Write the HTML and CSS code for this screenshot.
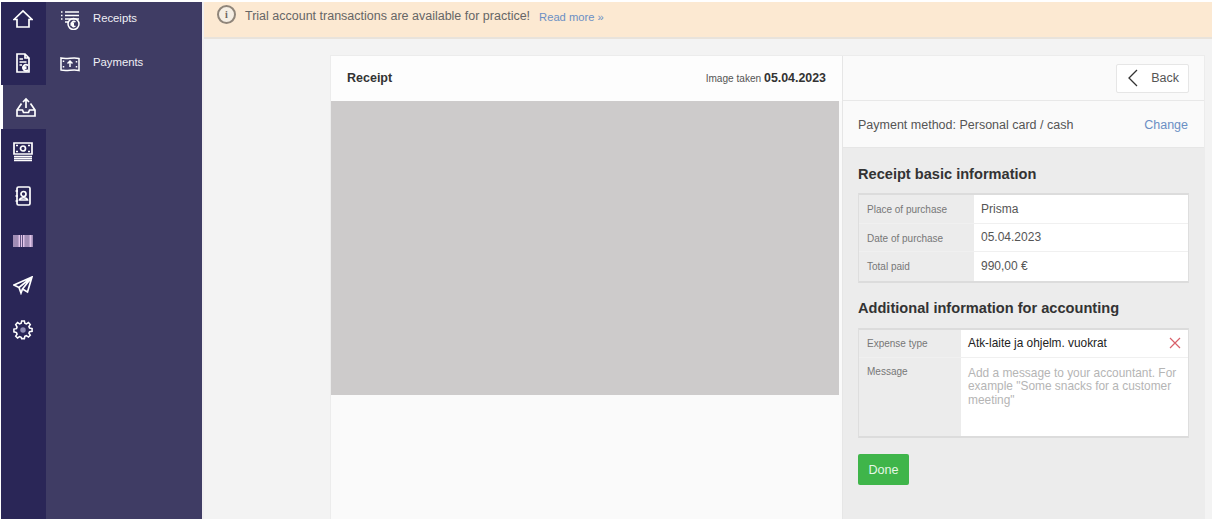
FILE: index.html
```html
<!DOCTYPE html>
<html lang="en">
<head>
  <meta charset="UTF-8">
  <title>Receipt</title>
  <link rel="stylesheet" href="styles.css">
</head>
<body>
  <nav class="rail">
    <a class="rail-item first">
      <svg viewBox="0 0 20 18" class="ic"><path d="M1 9.500 10 1l9 8.500h-3V17H4V9.500z"/></svg>
    </a>
    <a class="rail-item">
      <svg viewBox="0 0 20 20" class="ic"><path d="M4 1h8l4 4v14H4zM12 1v4h4M6.500 6H10M6.500 9h7M6.500 12H9"/><path d="M15 12.500a3 3 0 1 0 0 4.500M10 14h3.500M10 15.500h3.500"/></svg>
    </a>
    <a class="rail-item active">
      <svg viewBox="0 0 20 20" class="ic"><path d="M5.500 6.500 1 13v6h18v-6l-4.500-6.500M1 13h5.500l1 2.500h5l1-2.500H19M10 11V2M7 5l3-3 3 3"/></svg>
    </a>
    <a class="rail-item">
      <svg viewBox="0 0 20 20" class="ic"><path d="M1 1h18v11H1zM1 14.500h18M1 16.500h18M1 18.500h18"/><circle cx="10" cy="6.500" r="2.500"/><path d="M3 3.500h2M3 9.500h2M15 3.500h2M15 9.500h2"/></svg>
    </a>
    <a class="rail-item">
      <svg viewBox="0 0 20 20" class="ic"><rect x="4" y="1" width="13" height="18" rx="1.500"/><circle cx="10.500" cy="8" r="2.500"/><path d="M6.500 14c.5-3 7.500-3 8 0zM2.500 5H5M2.500 10H5M2.500 15H5"/></svg>
    </a>
    <a class="rail-item">
      <svg viewBox="0 0 20 12" class="ic barcode"><path d="M1 0v12M3 0v12M5 0v12M6.500 0v12M8.500 0v12M10.500 0v12M12 0v12M14 0v12M16 0v12M17.500 0v12M19 0v12"/></svg>
    </a>
    <a class="rail-item">
      <svg viewBox="0 0 20 20" class="ic"><path d="M19 2 1 10l5 2.500L19 2l-9.500 12 5 3zM6 12.500 8 18l1.500-4"/></svg>
    </a>
    <a class="rail-item gear">
      <svg viewBox="-1 0 22 22" class="ic"><path d="M8.500 1h3l.5 2.600 1.700.7L16 2.800 18 5l-1.500 2.200.7 1.700 2.800.5v3l-2.800.5-.7 1.700 1.500 2.200-2 2-2.300-1.500-1.700.7-.5 2.500h-3L8 19l-1.700-.7L4 19.800l-2-2 1.500-2.200-.7-1.700L0 13V10l2.800-.5.7-1.700L2 5l2-2.200 2.300 1.500L8 3.600z"/><circle cx="10" cy="11" r="3" class="gear-hub"/></svg>
    </a>
  </nav>

  <aside class="subnav">
    <a class="subnav-item">
      <svg viewBox="0 0 20 20" class="ic"><path d="M5 2h14M5 5.500h14M5 9h14M5 12h4M1 2h1.500M1 5.500h1.500M1 9h1.500"/><circle cx="13.500" cy="14" r="5.500"/><path d="M15.500 12a2.500 2.500 0 1 0 0 4M10.500 13.500H14M10.500 15H14"/></svg>
      <span>Receipts</span>
    </a>
    <a class="subnav-item">
      <svg viewBox="0 0 20 16" class="ic"><path d="M1 2c6 1.500 12-1 18 .5v12c-6-1.500-12 1-18-.5z"/><path d="M10 11V5M7.500 7.500 10 5l2.500 2.500M3.500 4.500V6M3.500 10v1.500M16.500 5v1.500M16.500 10v1.500"/></svg>
      <span>Payments</span>
    </a>
  </aside>

  <main class="main">
    <div class="banner">
      <span class="info-icon">i</span>
      <span class="banner-text">Trial account transactions are available for practice!</span>
      <a class="link banner-link">Read more »</a>
    </div>

    <div class="content">
      <section class="card">
        <div class="image-col">
          <header class="image-head">
            <strong class="title">Receipt</strong>
            <span class="taken">Image taken <b>05.04.2023</b></span>
          </header>
          <div class="image-box"></div>
        </div>

        <div class="form-col">
          <div class="back-row">
            <button class="back-btn">
              <svg viewBox="0 0 11 18" class="chevron"><path d="M10 1 2 9l8 8"/></svg>
              Back
            </button>
          </div>
          <div class="pay-row">
            <span>Payment method: Personal card / cash</span>
            <a class="link">Change</a>
          </div>
          <div class="form-body">
            <h2>Receipt basic information</h2>
            <div class="table basic">
              <div class="row"><div class="key">Place of purchase</div><div class="val">Prisma</div></div>
              <div class="row"><div class="key">Date of purchase</div><div class="val">05.04.2023</div></div>
              <div class="row"><div class="key">Total paid</div><div class="val">990,00 €</div></div>
            </div>

            <h2 class="second">Additional information for accounting</h2>
            <div class="table extra">
              <div class="row">
                <div class="key">Expense type</div>
                <div class="val dark">
                  Atk-laite ja ohjelm. vuokrat
                  <svg viewBox="0 0 12 12" class="clear"><path d="M1 1l10 10M11 1 1 11"/></svg>
                </div>
              </div>
              <div class="row message">
                <div class="key">Message</div>
                <div class="val hint">Add a message to your accountant. For example "Some snacks for a customer meeting"</div>
              </div>
            </div>

            <button class="done">Done</button>
          </div>
        </div>
      </section>
    </div>
  </main>
</body>
</html>
```

FILE: styles.css
```css
* {
  box-sizing: border-box;
}

html, body {
  height: 100%;
}

body {
  margin: 0;
  padding: 2px 0 2px 1px;
  display: flex;
  overflow: hidden;
  background-color: #ffffff;
  font-family: "Liberation Sans", Arial, sans-serif;
  color: #444;
}

.ic {
  fill: none;
  stroke: #ffffff;
  stroke-width: 1.7;
}

.rail {
  width: 45px;
  flex: none;
  background-color: #2a2657;
}

.rail-item {
  display: flex;
  justify-content: center;
  height: 44.4px;
  padding: 12.4px 1px 0 0;
}

.rail-item.first {
  height: 38.6px;
  padding-top: 7px;
}

.rail-item.gear {
  padding-top: 13.4px;
}

.rail-item .ic {
  width: 20px;
  height: 20px;
}

.rail-item.active {
  background-color: #3f3c64;
  border-left: 2px solid #ffffff;
  padding: 12.4px 0 0 3px;
}

.rail-item .barcode {
  stroke: #e3c6ea;
  stroke-width: 1.300;
  height: 12px;
  margin-top: 4px;
}

.gear-hub {
  fill: #8f8db5;
  stroke: none;
}

.subnav {
  width: 156px;
  flex: none;
  padding-top: 5px;
  background-color: #3f3c64;
  box-shadow: 2px 0 0 #f0eef0;
  z-index: 1;
}

.subnav-item {
  display: flex;
  align-items: center;
  gap: 13px;
  height: 22px;
  margin-bottom: 22px;
  padding-left: 14px;
  color: #f0eff5;
  font-size: 11.300px;
}

.subnav-item .ic {
  width: 20px;
  height: 20px;
  margin-top: 3px;
  stroke-width: 1.500;
}

.main {
  flex: 1;
  min-width: 0;
  display: flex;
  flex-direction: column;
  background-color: #f3f3f3;
}

.banner {
  height: 37px;
  flex: none;
  display: flex;
  align-items: flex-start;
  padding: 3px 0 0 15px;
  background-color: #fce9d2;
  border-bottom: 2px solid #e8e3dc;
  font-size: 12.500px;
  color: #666;
}

.info-icon {
  width: 19px;
  height: 19px;
  border: 2px solid #8f857a;
  border-radius: 50%;
  background-color: #f5eee4;
  text-align: center;
  font: bold 10px/15px "Liberation Serif", serif;
  color: #6d645c;
}

.banner-text {
  margin: 4px 0 0 9px;
}

.banner-link {
  margin: 6px 0 0 9px;
  font-size: 11.200px;
}

.link {
  color: #6b8fc4;
}

.content {
  flex: 1;
  min-height: 0;
  display: flex;
  padding: 16px 7px 0 129px;
}

.card {
  flex: 1;
  display: flex;
  background-color: #fafafa;
  border-top: 1px solid #ececec;
  box-shadow: -1px 0 0 #ececec;
}

.image-col {
  width: 511px;
  flex: none;
}

.image-head {
  height: 45px;
  display: flex;
  justify-content: space-between;
  align-items: center;
  padding: 0 16px 2px;
  background-color: #fdfdfd;
}

.title {
  font-size: 12.500px;
  color: #333;
}

.taken {
  font-size: 10.100px;
  color: #555;
}

.taken b {
  font-size: 12.400px;
  color: #333;
}

.image-box {
  width: 508px;
  height: 294px;
  background-color: #cdcbcb;
}

.form-col {
  flex: 1;
  display: flex;
  flex-direction: column;
  border-left: 1px solid #e6e6e6;
  border-right: 1px solid #ececec;
}

.back-row {
  height: 45px;
  flex: none;
  display: flex;
  justify-content: flex-end;
  align-items: center;
  padding-right: 15px;
  border-bottom: 1px solid #e8e8e8;
}

.back-btn {
  width: 73px;
  height: 29px;
  display: flex;
  align-items: center;
  justify-content: space-between;
  padding: 0 9px 0 10px;
  background-color: #ffffff;
  border: 1px solid #e6e6e6;
  border-radius: 2px;
  font-family: inherit;
  font-size: 12.500px;
  color: #555;
}

.chevron {
  width: 11px;
  height: 18px;
  fill: none;
  stroke: #333;
  stroke-width: 1.300;
}

.pay-row {
  height: 47px;
  flex: none;
  display: flex;
  justify-content: space-between;
  align-items: center;
  padding: 2px 16px 0 15px;
  border-bottom: 1px solid #e6e6e6;
  font-size: 12.500px;
  color: #555;
}

.form-body {
  flex: 1;
  padding: 17px 15px 0 15px;
  background-color: #ececec;
}

h2 {
  margin: 0 0 10px;
  font-size: 14.600px;
  line-height: 18px;
  color: #333;
}

h2.second {
  margin: 16px 0 11px;
}

.table {
  border-top: 2px solid #dcdcdc;
  border-bottom: 2px solid #dcdcdc;
  border-left: 1px solid #dedede;
  border-right: 1px solid #dedede;
}

.row {
  display: flex;
  height: 28.500px;
  border-bottom: 1px solid #f0f0f0;
}

.row:last-child {
  border-bottom: none;
}

.key {
  flex: none;
  padding: 9px 0 0 8px;
  font-size: 10px;
  color: #777;
}

.basic .key {
  width: 115px;
}

.extra .key {
  width: 102px;
  padding-top: 8px;
}

.val {
  flex: 1;
  display: flex;
  align-items: center;
  justify-content: space-between;
  padding: 0 7px;
  background-color: #ffffff;
  font-size: 12px;
  color: #555;
}

.val.dark {
  font-size: 11.850px;
  color: #222;
}

.clear {
  width: 12px;
  height: 12px;
  fill: none;
  stroke: #d8606a;
  stroke-width: 1.200;
}

.row.message {
  height: 78px;
}

.extra .message .key {
  padding-top: 8px;
}

.val.hint {
  display: block;
  padding: 9px 8px 0 7px;
  font-size: 11.900px;
  line-height: 13.300px;
  color: #b5b5b5;
}

.done {
  display: block;
  width: 51px;
  height: 31px;
  margin-top: 16px;
  padding: 0;
  background-color: #3fb54a;
  border: none;
  border-radius: 2px;
  font-family: inherit;
  font-size: 12.600px;
  color: #e6f7e6;
}
```
